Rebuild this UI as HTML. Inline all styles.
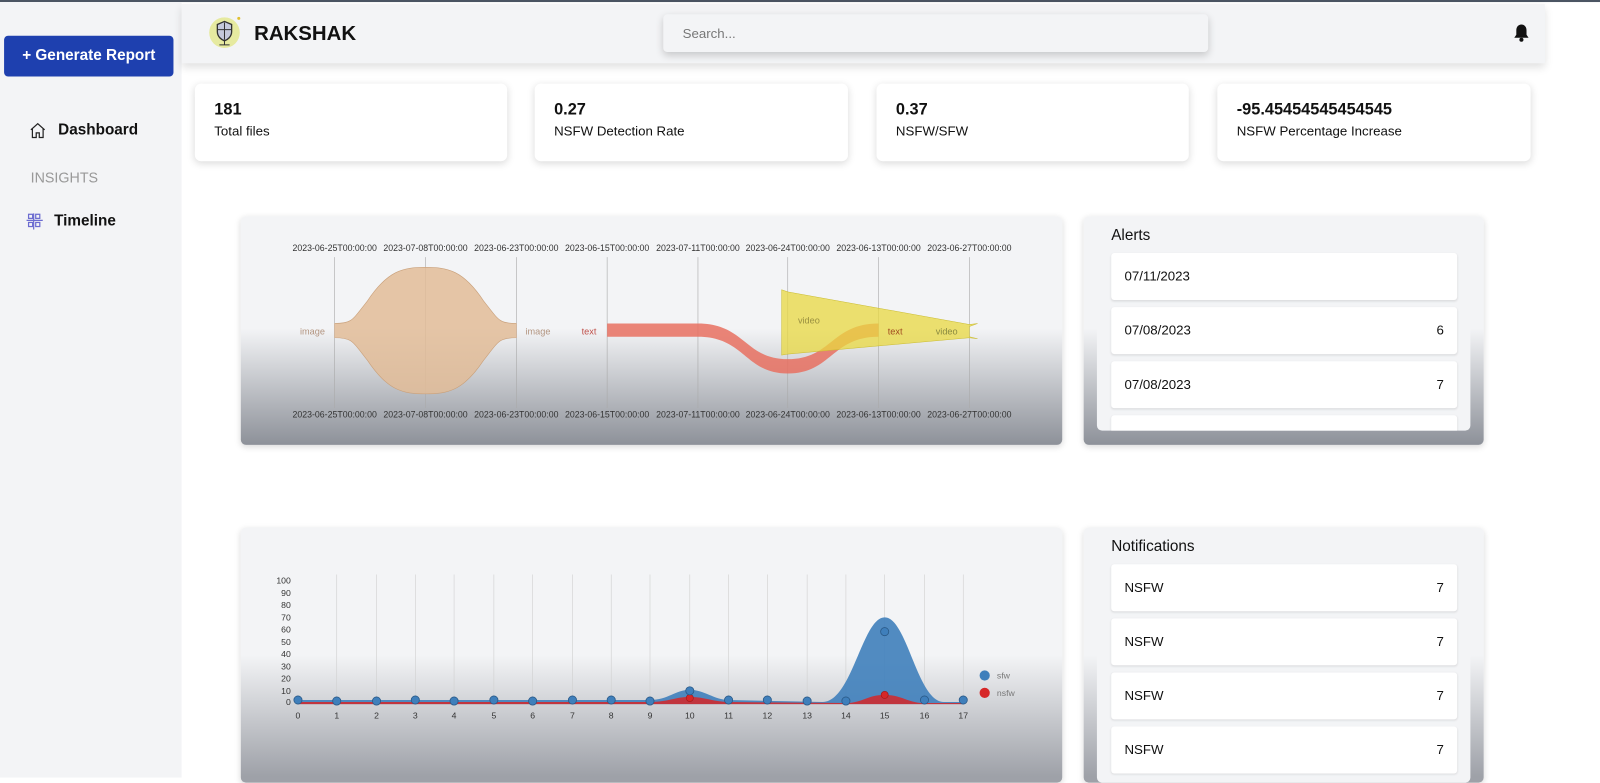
<!DOCTYPE html>
<html><head><meta charset="utf-8"><style>
*{box-sizing:border-box;margin:0;padding:0}
body{width:1600px;height:761px;overflow:hidden;background:#fff;font-family:"Liberation Sans",sans-serif;color:#111;position:relative}
#w{position:absolute;left:0;top:0;width:1568px;height:746px;transform:scale(1.0204);transform-origin:0 0}
.top{position:absolute;left:0;top:0;width:1568px;height:2px;background:#4b5563}
.side{position:absolute;left:0;top:2px;width:178px;height:760px;background:#f3f4f6}
.btn{position:absolute;left:4px;top:35px;width:166px;height:40px;background:#1e40af;border-radius:4px;color:#fff;font-weight:bold;font-size:15px;line-height:40px;text-align:center}
.nav{position:absolute;font-size:15px;font-weight:bold}
.hdr{position:absolute;left:178px;top:4px;width:1336px;height:58px;background:#f3f4f6;box-shadow:0 4px 8px rgba(0,0,0,.12)}
.search{position:absolute;left:650px;top:14px;width:534px;height:37px;background:#f3f4f6;border-radius:4px;box-shadow:0 3px 8px rgba(0,0,0,.18);font-size:13px;color:#777;line-height:37px;padding-left:19px}
.card{position:absolute;top:82px;height:76px;background:#fff;border-radius:6px;box-shadow:0 2px 8px rgba(0,0,0,.15);padding:17px 19px}
.card b{display:block;font-size:16px}
.card span{font-size:13px;display:block;margin-top:4px}
.panel{position:absolute;border-radius:5px;box-shadow:0 2px 6px rgba(0,0,0,.15)}
.p1{background:linear-gradient(#f3f4f6 0,#f3f4f6 110px,#8d9199 224px)}
.p2{background:linear-gradient(#f3f4f6 0,#f3f4f6 125px,#9ea1a8 244px)}
.inner{position:absolute;left:13px;right:13px;top:0;background:#f3f4f6;border-radius:0 0 5px 5px;overflow:hidden}
.inner h3{font-size:15px;font-weight:normal;padding:10px 0 0 14px;height:36px}
.item{margin:0 13px 7px 14px;height:46px;background:#fff;border-radius:3px;box-shadow:0 1px 2px rgba(0,0,0,.1);font-size:13px;line-height:46px;padding:0 13px;display:flex;justify-content:space-between}
</style></head><body><div id="w">
<div class="top"></div>
<div class="side">
<div class="btn" style="top:33px">+ Generate Report</div>
<div class="nav" style="left:30px;top:117px"><svg width="18" height="18" viewBox="0 0 24 24" style="position:absolute;left:-2px;top:0" fill="none" stroke="#222" stroke-width="1.6"><path d="M3 11 12 3l9 8M5 9.5V21h5v-6h4v6h5V9.5"/></svg><span style="margin-left:27px">Dashboard</span></div>
<div style="position:absolute;left:30px;top:164px;font-size:14px;color:#999">INSIGHTS</div>
<div class="nav" style="left:26px;top:206px"><svg width="16" height="16" viewBox="0 0 16 16" style="position:absolute;left:0;top:1px" fill="none" stroke="#6b6bd0" stroke-width="1.2"><rect x="2" y="1" width="4" height="4"/><rect x="9" y="1" width="4" height="4"/><rect x="2" y="9" width="4" height="4"/><rect x="9" y="9" width="4" height="4"/><path d="M0 7h16M7 0v16"/></svg><span style="margin-left:27px">Timeline</span></div>
</div>
<div class="hdr">
<svg width="36" height="36" viewBox="0 0 36 36" style="position:absolute;left:24px;top:10px"><circle cx="18" cy="18" r="15" fill="#e6eaa0"/><circle cx="32" cy="4" r="1.5" fill="#e0c030"/><path d="M11 10l7-3 7 3v7c0 5-4 8-7 9-3-1-7-4-7-9z" fill="#c5c9dc" stroke="#333" stroke-width="1.3"/><path d="M18 8v17M11.5 15h13" stroke="#333" stroke-width="1"/><path d="M18 26v4M13 30h10" stroke="#333"/></svg>
<div style="position:absolute;left:71px;top:18px;font-size:20px;font-weight:900">RAKSHAK</div>
<svg width="16" height="18" viewBox="0 0 16 18" style="position:absolute;left:1305px;top:19px"><path d="M8 1c-3 0-5 2.5-5 5.5V11L1 14h14l-2-3V6.5C13 3.5 11 1 8 1z" fill="#111"/><circle cx="8" cy="16" r="2" fill="#111"/></svg>
</div>
<div class="search">Search...</div>
<div class="card" style="left:191px;width:306px"><b>181</b><span>Total files</span></div>
<div class="card" style="left:524px;width:307px"><b>0.27</b><span>NSFW Detection Rate</span></div>
<div class="card" style="left:859px;width:306px"><b>0.37</b><span>NSFW/SFW</span></div>
<div class="card" style="left:1193px;width:307px"><b>-95.45454545454545</b><span>NSFW Percentage Increase</span></div>

<div class="panel p1" style="left:236px;top:212px;width:805px;height:224px">
<svg width="805" height="224" style="position:absolute;left:0;top:0" font-family="Liberation Sans" font-size="9">
<g transform="translate(-236,-212)">
<g stroke="#aaa" stroke-width=".6">
<path d="M328 252V400M417 252V400M506 252V400M595 252V400M684 252V400M772 252V400M861 252V400M950 252V400"/></g>
<g fill="#333" text-anchor="middle" font-size="8.6">
<text x="328" y="246">2023-06-25T00:00:00</text><text x="417" y="246">2023-07-08T00:00:00</text><text x="506" y="246">2023-06-23T00:00:00</text><text x="595" y="246">2023-06-15T00:00:00</text><text x="684" y="246">2023-07-11T00:00:00</text><text x="772" y="246">2023-06-24T00:00:00</text><text x="861" y="246">2023-06-13T00:00:00</text><text x="950" y="246">2023-06-27T00:00:00</text>
<text x="328" y="409">2023-06-25T00:00:00</text><text x="417" y="409">2023-07-08T00:00:00</text><text x="506" y="409">2023-06-23T00:00:00</text><text x="595" y="409">2023-06-15T00:00:00</text><text x="684" y="409">2023-07-11T00:00:00</text><text x="772" y="409">2023-06-24T00:00:00</text><text x="861" y="409">2023-06-13T00:00:00</text><text x="950" y="409">2023-06-27T00:00:00</text></g>
<path d="M328 317C345 317 345 314 360 295C380 265 395 262 417 262C439 262 454 265 474 295C489 314 489 317 506 317V331C489 331 489 334 474 353C454 383 439 386 417 386C395 386 380 383 360 353C345 334 345 331 328 331Z" fill="#e2bc98" fill-opacity=".85" stroke="#c9a07a" stroke-width=".6"/>
<path d="M595 317H684C730 317 730 352 772 352C815 352 815 317 861 317V330C815 330 815 366 772 366C730 366 730 330 684 330H595Z" fill="#e87060" fill-opacity=".85"/>
<path d="M766 284L772 286L950 318L958 317L950 320V330L958 332L950 331L772 347L766 348Z" fill="#e8d840" fill-opacity=".75" stroke="#c9bb30" stroke-width=".5"/>
<g font-size="9"><text x="294" y="328" fill="#b39580">image</text><text x="515" y="328" fill="#b39580">image</text><text x="570" y="328" fill="#c0504a">text</text><text x="782" y="317" fill="#9a9040">video</text><text x="870" y="328" fill="#a04a20">text</text><text x="917" y="328" fill="#8a8a40">video</text></g>
</g></svg></div>

<div class="panel p1" style="left:1062px;top:212px;width:392px;height:224px">
<div class="inner" style="height:210px"><h3>Alerts</h3>
<div class="item"><span>07/11/2023</span><span></span></div>
<div class="item"><span>07/08/2023</span><span>6</span></div>
<div class="item"><span>07/08/2023</span><span>7</span></div>
<div class="item"><span></span><span></span></div></div></div>

<div class="panel p2" style="left:236px;top:517px;width:805px;height:250px">
<svg width="805" height="250" style="position:absolute;left:0;top:0" font-family="Liberation Sans" font-size="8.5">
<g transform="translate(-236,-517)">
<g stroke="#d0d0d0" stroke-width=".6">
<path d="M330 563V690M369 563V690M407 563V690M445 563V690M484 563V690M522 563V690M561 563V690M599 563V690M637 563V690M676 563V690M714 563V690M752 563V690M791 563V690M829 563V690M867 563V690M906 563V690M944 563V690"/></g>
<g fill="#333" text-anchor="end">
<text x="285" y="572">100</text><text x="285" y="584">90</text><text x="285" y="596">80</text><text x="285" y="608">70</text><text x="285" y="620">60</text><text x="285" y="632">50</text><text x="285" y="644">40</text><text x="285" y="656">30</text><text x="285" y="668">20</text><text x="285" y="680">10</text><text x="285" y="691">0</text></g>
<g fill="#333" text-anchor="middle">
<text x="292" y="704">0</text><text x="330" y="704">1</text><text x="369" y="704">2</text><text x="407" y="704">3</text><text x="445" y="704">4</text><text x="484" y="704">5</text><text x="522" y="704">6</text><text x="561" y="704">7</text><text x="599" y="704">8</text><text x="637" y="704">9</text><text x="676" y="704">10</text><text x="714" y="704">11</text><text x="752" y="704">12</text><text x="791" y="704">13</text><text x="829" y="704">14</text><text x="867" y="704">15</text><text x="906" y="704">16</text><text x="944" y="704">17</text></g>
<path d="M292 686L637 686C655 686 662 676 676 676C690 676 700 686 714 686L806 688C835 688 845 605 867 605C889 605 899 688 925 688L944 688V690H292Z" fill="#3f7fbb" fill-opacity=".9"/>
<path d="M292 688L637 688C655 688 662 683 676 683C690 683 700 688 714 688L829 689C845 689 850 681 867 681C884 681 890 689 906 689L944 689V690H292Z" fill="#d62728" fill-opacity=".85"/>
<g fill="#d62728" stroke="#a01818" stroke-width=".6"><circle cx="676" cy="684" r="3.5"/><circle cx="867" cy="681" r="3.5"/></g>
<g fill="#3f7fbb" stroke="#2a5a88" stroke-width=".8">
<circle cx="292" cy="686" r="4"/><circle cx="330" cy="687" r="4"/><circle cx="369" cy="687" r="4"/><circle cx="407" cy="686" r="4"/><circle cx="445" cy="687" r="4"/><circle cx="484" cy="686" r="4"/><circle cx="522" cy="687" r="4"/><circle cx="561" cy="686" r="4"/><circle cx="599" cy="686" r="4"/><circle cx="637" cy="687" r="4"/><circle cx="676" cy="677" r="4"/><circle cx="714" cy="686" r="4"/><circle cx="752" cy="686" r="4"/><circle cx="791" cy="687" r="4"/><circle cx="829" cy="687" r="4"/><circle cx="867" cy="619" r="4"/><circle cx="906" cy="686" r="4"/><circle cx="944" cy="686" r="4"/></g>
<circle cx="965" cy="662" r="5" fill="#3f7fbb"/><circle cx="965" cy="679" r="5" fill="#d62728"/>
<text x="977" y="665" fill="#777">sfw</text><text x="977" y="682" fill="#777">nsfw</text>
</g></svg></div>

<div class="panel p2" style="left:1062px;top:517px;width:392px;height:250px">
<div class="inner" style="height:250px"><h3>Notifications</h3>
<div class="item"><span>NSFW</span><span>7</span></div>
<div class="item"><span>NSFW</span><span>7</span></div>
<div class="item"><span>NSFW</span><span>7</span></div>
<div class="item"><span>NSFW</span><span>7</span></div></div></div>
</div></body></html>
